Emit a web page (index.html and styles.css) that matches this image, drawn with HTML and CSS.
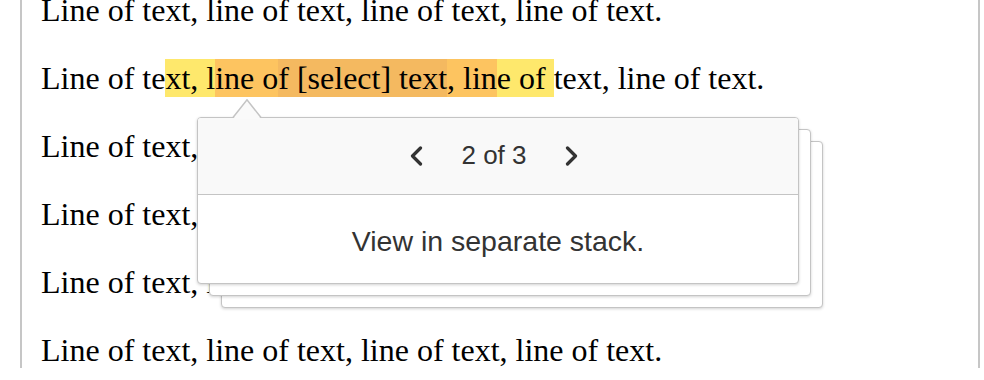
FILE: index.html
```html
<!DOCTYPE html>
<html lang="en">
<head>
    <meta charset="UTF-8">
    <meta name="viewport" content="width=device-width, initial-scale=1.0">
    <title>Highlight stack</title>
    <link rel="stylesheet" href="styles.css">
</head>
<body>
    <div class="page">
        <p>Line of text, line of text, line of text, line of text.</p>
        <p>Line of te<mark class="hl hl-outer">xt, l<mark class="hl hl-mid">ine o<mark class="hl hl-inner">f [select] text</mark>, lin</mark>e of </mark>text, line of text.</p>
        <p>Line of text, line of text, line of text, line of text.</p>
        <p>Line of text, line of text, line of text, line of text.</p>
        <p>Line of text, line of text, line of text, line of text.</p>
        <p>Line of text, line of text, line of text, line of text.</p>

        <div class="stack">
            <div class="card card-back2"></div>
            <div class="card card-back1"></div>
            <div class="card card-front">
                <svg class="card-arrow" width="30" height="20" viewBox="0 0 30 20">
                    <polygon points="1,20 15,1 29,20" fill="#fafafa"/>
                    <polyline points="1,18.5 15,0.8 29,18.5" fill="none" stroke="#c4c4c4" stroke-width="1.5"/>
                </svg>
                <div class="card-head">
                    <button class="nav-btn" aria-label="Previous">
                        <svg width="14" height="20" viewBox="0 0 14 20"><path d="M11.5 2 L3.5 10 L11.5 18" fill="none" stroke="#333" stroke-width="3.2" stroke-linecap="round" stroke-linejoin="round"/></svg>
                    </button>
                    <span class="counter">2 of 3</span>
                    <button class="nav-btn" aria-label="Next">
                        <svg width="14" height="20" viewBox="0 0 14 20"><path d="M2.5 2 L10.5 10 L2.5 18" fill="none" stroke="#333" stroke-width="3.2" stroke-linecap="round" stroke-linejoin="round"/></svg>
                    </button>
                </div>
                <div class="card-body">View in separate stack.</div>
            </div>
        </div>
    </div>
</body>
</html>
```

FILE: styles.css
```css
body {
    margin: 0;
    background: #fff;
    font-family: "Liberation Serif", "Times New Roman", serif;
    overflow: hidden;
}
.page {
    position: relative;
    margin: -40px 4px 0 20px;
    padding: 0 19px;
    border-left: 2px solid #c6c6c6;
    border-right: 2px solid #c6c6c6;
    font-size: 32px;
    line-height: 36px;
    color: #000;
}
.page p {
    margin: 32px 0;
}
.hl {
    color: #000;
    padding: 1px 0;
}
.hl-outer {
    background: #fee86c;
}
.hl-mid {
    background: #fdc460;
}
.hl-inner {
    background: #f4b960;
}
.stack {
    position: absolute;
    left: 175px;
    top: 125px;
    display: grid;
}
.card {
    grid-area: 1 / 1;
    width: 602px;
    height: 167px;
    box-sizing: border-box;
    border: 1px solid #c4c4c4;
    border-radius: 4px;
    background: #fff;
    box-shadow: 0 1px 3px rgba(0, 0, 0, 0.18);
}
.card-back2 {
    margin: 24px 0 0 24px;
}
.card-back1 {
    margin: 12px 0 0 12px;
}
.card-front {
    position: relative;
    display: flex;
    flex-direction: column;
    font-family: "Liberation Sans", Arial, sans-serif;
    color: #333;
}
.card-arrow {
    position: absolute;
    left: 34px;
    top: -19px;
}
.card-head {
    height: 77px;
    box-sizing: border-box;
    padding: 0 8px 3px 0;
    background: #f9f9f9;
    border-bottom: 1px solid #c4c4c4;
    border-radius: 3px 3px 0 0;
    display: flex;
    align-items: center;
    justify-content: center;
    gap: 38px;
    font-size: 26px;
}
.nav-btn {
    display: flex;
    padding: 3px 0 0 0;
    border: none;
    background: none;
    cursor: pointer;
}
.card-body {
    flex: 1;
    display: flex;
    align-items: center;
    justify-content: center;
    padding-top: 4px;
    font-size: 28.5px;
}
```
